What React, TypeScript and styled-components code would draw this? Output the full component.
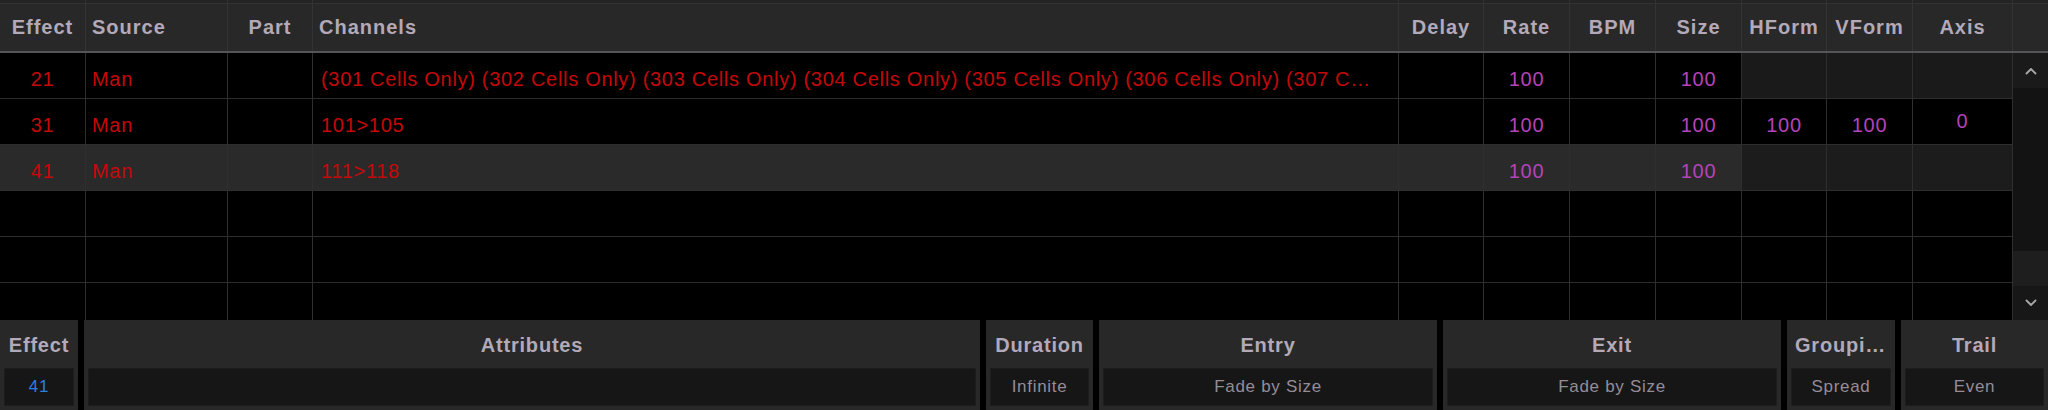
import React from "react";
import styled, { createGlobalStyle } from "styled-components";

const COLS = [86, 142, 85, 1086, 85, 86, 86, 86, 85, 86, 100];
const gridCols = COLS.map((c) => `${c}px`).join(" ");

const GlobalStyle = createGlobalStyle`
  html, body { margin: 0; padding: 0; background: #000; }
  body { font-family: "Liberation Sans", Arial, sans-serif; -webkit-font-smoothing: antialiased; }
  *, *::before, *::after { box-sizing: border-box; }
`;

const Screen = styled.div`
  width: 2048px;
  height: 410px;
  display: flex;
  flex-direction: column;
  background: #000;
  overflow: hidden;
`;

const Table = styled.div`
  height: 320px;
  display: flex;
  flex-direction: column;
`;

const HeaderRow = styled.div`
  display: grid;
  grid-template-columns: ${gridCols} 1fr;
  height: 53px;
  flex: none;
  background: #282828;
  box-shadow: inset 0 3px 0 #242424, inset 0 4px 0 #333;
  border-bottom: 2px solid #57535b;
`;

type Align = "left" | "center" | "right";

const justify = (a: Align) =>
  a === "left" ? "flex-start" : a === "right" ? "flex-end" : "center";

const HeaderCell = styled.div<{ $align: Align; $last?: boolean }>`
  display: flex;
  align-items: center;
  justify-content: ${(p) => justify(p.$align)};
  padding: 4px 6px 0;
  border-right: ${(p) => (p.$last ? "none" : "1px solid #333")};
  font-weight: 700;
  font-size: 20px;
  letter-spacing: 1px;
  color: #b3a9b8;
  white-space: nowrap;
  overflow: hidden;
`;

const Body = styled.div`
  display: flex;
  height: 267px;
  flex: none;
`;

const Rows = styled.div`
  flex: 1;
  display: flex;
  flex-direction: column;
  overflow: hidden;
`;

const Row = styled.div`
  display: grid;
  grid-template-columns: ${gridCols};
  height: 46px;
  flex: none;
  border-bottom: 1px solid #2e2e2e;
`;

type Tone = "plain" | "selected" | "dim" | "dimSelected";

const toneBg: Record<Tone, string> = {
  plain: "#000",
  selected: "#2a2a2a",
  dim: "#1a1a1a",
  dimSelected: "#1c1c1c",
};

const Cell = styled.div<{
  $align: Align;
  $tone: Tone;
  $ink?: "red" | "magenta";
  $lift?: boolean;
  $pad?: number;
}>`
  display: flex;
  align-items: center;
  justify-content: ${(p) => justify(p.$align)};
  min-width: 0;
  overflow: hidden;
  padding: ${(p) => (p.$lift ? "0" : "7px")} ${(p) => p.$pad ?? 6}px 0;
  background: ${(p) => toneBg[p.$tone]};
  border-right: 1px solid #2e2e2e;
  font-size: 20px;
  letter-spacing: 0.7px;
  color: ${(p) => (p.$ink === "magenta" ? "#b443bb" : "#c40909")};
`;

const CellText = styled.span`
  white-space: nowrap;
  overflow: hidden;
  text-overflow: ellipsis;
  min-width: 0;
`;

const ChannelsText = styled(CellText)`
  padding-right: 14px;
`;

const Scrollbar = styled.div`
  width: 35px;
  flex: none;
  display: flex;
  flex-direction: column;
  background: #131313;
`;

const ScrollButton = styled.div<{ $h: number; $bg: string }>`
  height: ${(p) => p.$h}px;
  flex: none;
  display: flex;
  align-items: center;
  justify-content: center;
  background: ${(p) => p.$bg};
`;

const Track = styled.div`
  flex: 1;
  display: flex;
  flex-direction: column;
  justify-content: flex-end;
`;

const Thumb = styled.div`
  height: 35px;
  background: #1e1e1e;
`;

const Panel = styled.div`
  height: 90px;
  display: flex;
  gap: 6px;
  background: #000;
`;

const Box = styled.div<{ $w: number }>`
  width: ${(p) => p.$w}px;
  flex: none;
  display: flex;
  flex-direction: column;
  background: #282828;
  min-width: 0;
`;

const BoxTitle = styled.div`
  height: 48px;
  display: flex;
  align-items: center;
  justify-content: center;
  padding: 3px 8px 0;
  font-weight: 700;
  font-size: 20px;
  letter-spacing: 0.8px;
  color: #b3a9b8;
  min-width: 0;
`;

const BoxTitleText = styled.span`
  white-space: nowrap;
  overflow: hidden;
  text-overflow: ellipsis;
  min-width: 0;
`;

const BoxValue = styled.div<{ $accent?: boolean }>`
  height: 38px;
  margin: 0 4px 4px;
  display: flex;
  align-items: center;
  justify-content: center;
  background: #161616;
  border: 1px solid #1d1d1d;
  font-size: 17px;
  letter-spacing: 0.7px;
  color: ${(p) => (p.$accent ? "#2a7fe3" : "#958c99")};
`;

const Chevron = ({ up }: { up?: boolean }) => (
  <svg width="12" height="8" viewBox="0 0 12 8">
    <path
      d={up ? "M1.5 6.5 L6 2 L10.5 6.5" : "M1.5 1.5 L6 6 L10.5 1.5"}
      fill="none"
      stroke="#a9a9a9"
      strokeWidth="1.8"
      strokeLinecap="round"
      strokeLinejoin="round"
    />
  </svg>
);

const headers: { label: string; align: Align }[] = [
  { label: "Effect", align: "center" },
  { label: "Source", align: "left" },
  { label: "Part", align: "center" },
  { label: "Channels", align: "left" },
  { label: "Delay", align: "center" },
  { label: "Rate", align: "center" },
  { label: "BPM", align: "center" },
  { label: "Size", align: "center" },
  { label: "HForm", align: "center" },
  { label: "VForm", align: "center" },
  { label: "Axis", align: "center" },
];

type Entry = {
  effect: string;
  source: string;
  channels: string;
  rate: string;
  size: string;
  hform?: string;
  vform?: string;
  axis?: string;
  selected?: boolean;
  formDisabled?: boolean;
};

const cellsOnly = Array.from({ length: 7 }, (_, i) => `(${301 + i} Cells Only)`).join(" ");

const entries: Entry[] = [
  { effect: "21", source: "Man", channels: cellsOnly, rate: "100", size: "100", formDisabled: true },
  { effect: "31", source: "Man", channels: "101>105", rate: "100", size: "100", hform: "100", vform: "100", axis: "0" },
  { effect: "41", source: "Man", channels: "111>118", rate: "100", size: "100", selected: true, formDisabled: true },
];

const DataRow = ({ e }: { e: Entry }) => {
  const base: Tone = e.selected ? "selected" : "plain";
  const form: Tone = e.formDisabled ? (e.selected ? "dimSelected" : "dim") : base;
  return (
    <Row>
      <Cell $align="center" $tone={base} $ink="red"><CellText>{e.effect}</CellText></Cell>
      <Cell $align="left" $tone={base} $ink="red"><CellText>{e.source}</CellText></Cell>
      <Cell $align="center" $tone={base} />
      <Cell $align="left" $tone={base} $ink="red" $pad={8}>
        <ChannelsText>{e.channels}</ChannelsText>
      </Cell>
      <Cell $align="center" $tone={base} />
      <Cell $align="center" $tone={base} $ink="magenta"><CellText>{e.rate}</CellText></Cell>
      <Cell $align="center" $tone={base} />
      <Cell $align="center" $tone={base} $ink="magenta"><CellText>{e.size}</CellText></Cell>
      <Cell $align="center" $tone={form} $ink="magenta"><CellText>{e.hform}</CellText></Cell>
      <Cell $align="center" $tone={form} $ink="magenta"><CellText>{e.vform}</CellText></Cell>
      <Cell $align="center" $tone={form} $ink="magenta" $lift><CellText>{e.axis}</CellText></Cell>
    </Row>
  );
};

const EmptyRow = () => (
  <Row>
    {COLS.map((_, i) => (
      <Cell key={i} $align="center" $tone="plain" />
    ))}
  </Row>
);

const boxes: { title: string; value: string; w: number; accent?: boolean }[] = [
  { title: "Effect", value: "41", w: 78, accent: true },
  { title: "Attributes", value: "", w: 896 },
  { title: "Duration", value: "Infinite", w: 107 },
  { title: "Entry", value: "Fade by Size", w: 338 },
  { title: "Exit", value: "Fade by Size", w: 338 },
  { title: "Grouping", value: "Spread", w: 108 },
  { title: "Trail", value: "Even", w: 147 },
];

export default function App() {
  return (
    <>
      <GlobalStyle />
      <Screen>
        <Table>
          <HeaderRow>
            {headers.map((h) => (
              <HeaderCell key={h.label} $align={h.align}>
                {h.label}
              </HeaderCell>
            ))}
            <HeaderCell $align="center" $last />
          </HeaderRow>
          <Body>
            <Rows>
              {entries.map((e) => (
                <DataRow key={e.effect} e={e} />
              ))}
              <EmptyRow />
              <EmptyRow />
              <EmptyRow />
            </Rows>
            <Scrollbar>
              <ScrollButton $h={35} $bg="#1a1a1a">
                <Chevron up />
              </ScrollButton>
              <Track>
                <Thumb />
              </Track>
              <ScrollButton $h={34} $bg="#171717">
                <Chevron />
              </ScrollButton>
            </Scrollbar>
          </Body>
        </Table>
        <Panel>
          {boxes.map((b) => (
            <Box key={b.title} $w={b.w}>
              <BoxTitle>
                <BoxTitleText>{b.title}</BoxTitleText>
              </BoxTitle>
              <BoxValue $accent={b.accent}>{b.value}</BoxValue>
            </Box>
          ))}
        </Panel>
      </Screen>
    </>
  );
}
